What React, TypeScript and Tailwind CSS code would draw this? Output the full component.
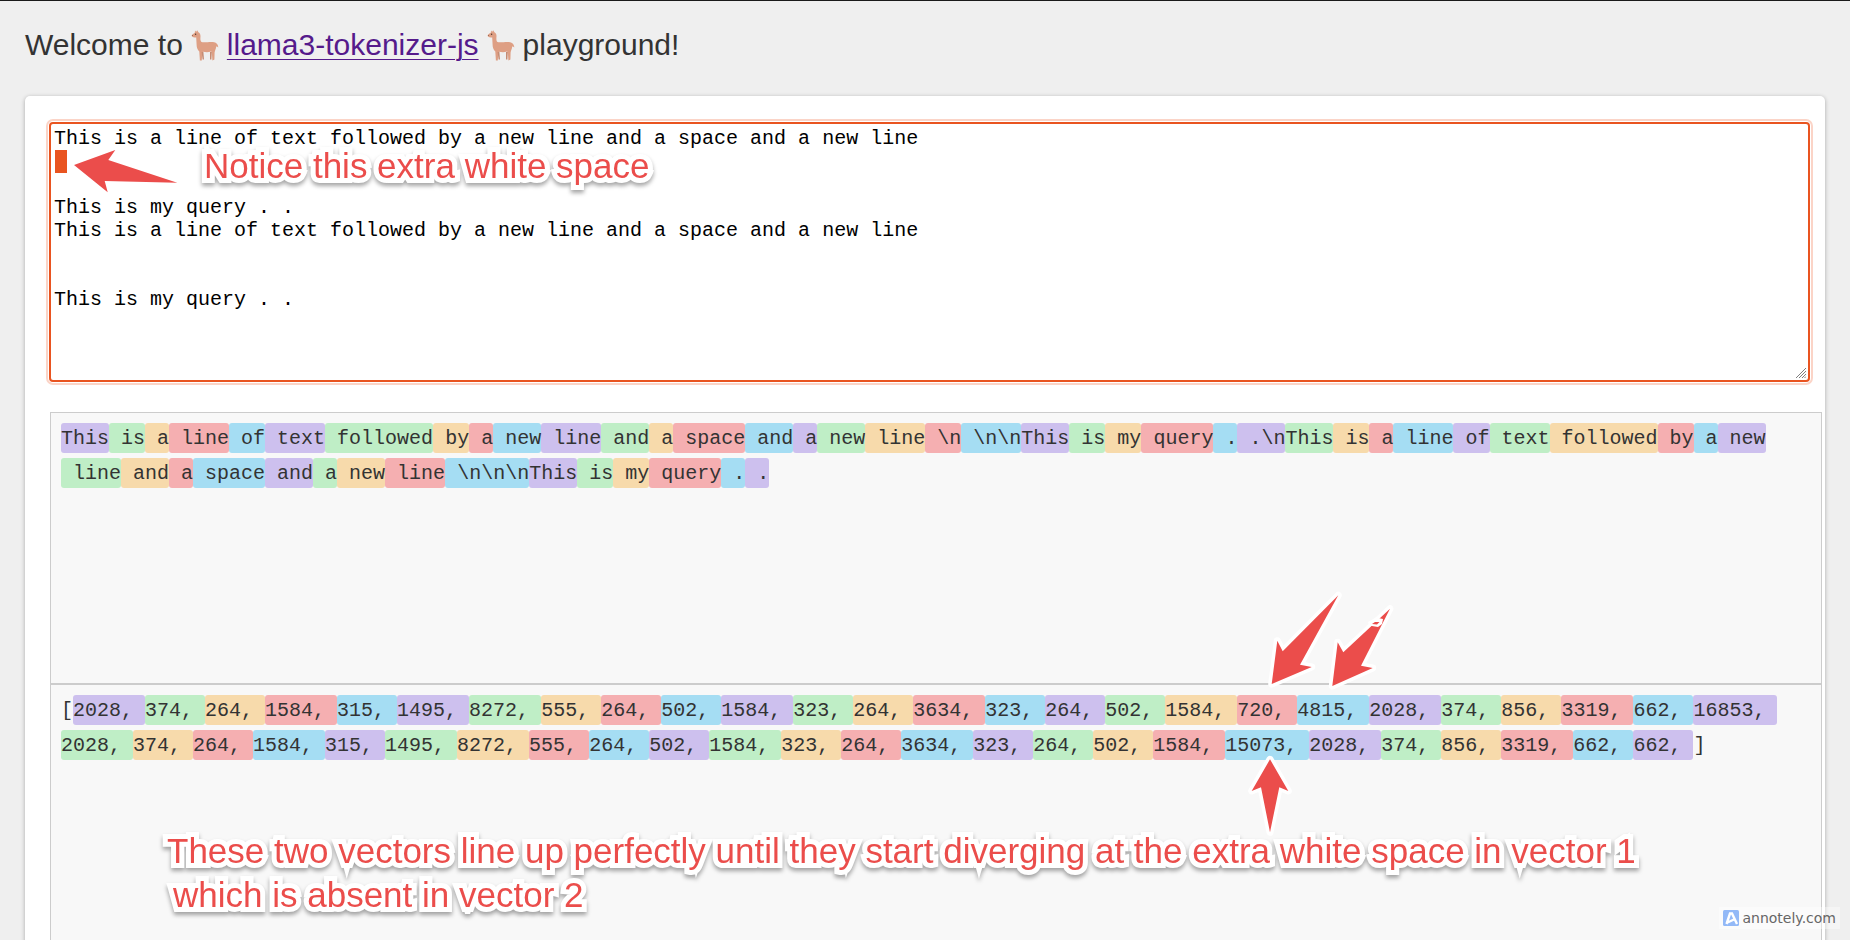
import React from "react";

const LINE = "This is a line of text followed by a new line and a space and a new line";
const QUERY = "This is my query . .";
const INPUT_TEXT = [LINE, " ", "", QUERY, LINE, "", "", QUERY].join("\n");

const TOKENS: [string, number][] = [
  ["This", 2028], [" is", 374], [" a", 264], [" line", 1584], [" of", 315], [" text", 1495],
  [" followed", 8272], [" by", 555], [" a", 264], [" new", 502], [" line", 1584], [" and", 323],
  [" a", 264], [" space", 3634], [" and", 323], [" a", 264], [" new", 502], [" line", 1584],
  [" \\n", 720], [" \\n\\n", 4815], ["This", 2028], [" is", 374], [" my", 856], [" query", 3319],
  [" .", 662], [" .\\n", 16853],
  ["This", 2028], [" is", 374], [" a", 264], [" line", 1584], [" of", 315], [" text", 1495],
  [" followed", 8272], [" by", 555], [" a", 264], [" new", 502], [" line", 1584], [" and", 323],
  [" a", 264], [" space", 3634], [" and", 323], [" a", 264], [" new", 502], [" line", 1584],
  [" \\n\\n\\n", 15073], ["This", 2028], [" is", 374], [" my", 856], [" query", 3319],
  [" .", 662], [" .", 662],
];

const TOKEN_COLORS = [
  "bg-[rgba(107,64,216,0.3)]",
  "bg-[rgba(104,222,122,0.4)]",
  "bg-[rgba(244,172,54,0.4)]",
  "bg-[rgba(239,65,70,0.4)]",
  "bg-[rgba(39,181,234,0.4)]",
];

const ARROWS = [
  "74,165 115.3,150 108.3,160 177.3,182.7 104.7,181 107.7,192.3",
  "1271.7,684 1277.3,640.7 1282.7,651.3 1338.3,595.3 1300,664.7 1311.7,667",
  "1332.3,686 1337.7,642.3 1343.3,652.3 1390,608.7 1361,665.7 1372.7,668",
  "1270,759.3 1288.3,791 1279.3,787.3 1270,832.3 1261,787.3 1251.7,791",
];

function Token({ index, children }: { index: number; children: React.ReactNode }) {
  return (
    <span className={`h-[30px] whitespace-pre rounded-[3px] ${TOKEN_COLORS[index % 5]}`}>
      {children}
    </span>
  );
}

function OutputBox({ label, children }: { label: string; children: React.ReactNode }) {
  return (
    <section
      aria-label={label}
      className="flex h-[272px] flex-wrap content-start gap-y-[5px] border border-[#ccc] bg-[#f8f8f8] p-2.5 font-['Liberation_Mono',monospace] text-[20px] leading-8 text-[#333]"
    >
      {children}
    </section>
  );
}

function Llama() {
  return (
    <svg role="img" aria-label="llama" viewBox="0 0 28 31" className="mx-2 h-[31px] w-7">
      <path
        d="M4 0.5 L5.2 1.8 L6.2 0.2 L7.4 2.2 C9 3 9.6 4.5 9.5 6.5 C9.3 9 9.2 11 10.5 12 C13 13 18 11.6 22 12 C25 12.3 27.5 14.5 27.2 17.6 C26.3 16.6 25.8 16.4 25.2 16.6 C25 19 24 20.5 23.6 22.5 L23.4 29.5 L21.4 30.5 L20.9 23.5 L20.2 21.6 C17 22.6 14.5 22.4 12.2 21.8 L11.2 24 L10.8 30.5 L8.9 30.5 L8.3 21.5 C6.3 19.5 5.6 17.4 5.6 14.5 L5.2 7.6 C3.6 7.6 1 7.4 0.7 6 C0.5 4.6 2.6 3.6 3.8 2.8 Z"
        fill="#de9f84"
      />
      <path d="M10.6 22 L12.4 22 L13 29.6 L11.6 29.6 Z M19 22 L20.8 22 L20.4 29.6 L19 29.6 Z" fill="#c58b73" />
      <circle cx="4.6" cy="4.3" r="0.7" fill="#543930" />
      <path d="M0.8 5.2 L2 5 L1.6 6 Z" fill="#6d4537" />
    </svg>
  );
}

function Note({ className, children }: { className: string; children: React.ReactNode }) {
  return (
    <p
      className={`absolute whitespace-pre font-['Liberation_Sans',sans-serif] text-[35px] leading-[44px] text-[#eb4d4b] [-webkit-text-stroke:10px_white] [paint-order:stroke_fill] [stroke-linejoin:round] drop-shadow-[0_3px_2px_rgba(0,0,0,0.35)] ${className}`}
    >
      {children}
    </p>
  );
}

function Arrows() {
  return (
    <svg aria-hidden="true" className="h-full w-full">
      {ARROWS.map((points) => (
        <polygon
          key={points}
          points={points}
          fill="#eb4d4b"
          stroke="white"
          strokeWidth="7"
          strokeLinejoin="round"
          paintOrder="stroke"
        />
      ))}
      <path d="M1368 622 L1376 617.5 L1383 619 L1382 624 L1378 627 L1369 625.5 Z" fill="white" />
      <path d="M1372 624 L1375 622 L1379.5 622 L1377 624.5 Z" fill="#eb4d4b" />
    </svg>
  );
}

export default function App() {
  return (
    <div className="relative flex h-screen flex-col overflow-hidden border-t border-[#1a1a1a] bg-[#efefef] px-[25px] pt-6 font-['Liberation_Sans',sans-serif] text-[#333]">
      <h1 className="flex shrink-0 items-center text-[30px] leading-10">
        Welcome to
        <Llama />
        <a href="#llama3-tokenizer-js" className="text-[#551a8b] underline decoration-1 underline-offset-4">
          llama3-tokenizer-js
        </a>
        <Llama />
        playground!
      </h1>

      <main className="mt-[31px] shrink-0 rounded-[5px] bg-white pt-[26px] pr-[3px] pb-6 pl-6 shadow-[0_1px_4px_rgba(0,0,0,0.3)]">
        <div className="relative mr-3 h-[260px]">
          <textarea
            aria-label="Text to tokenize"
            defaultValue={INPUT_TEXT}
            spellCheck={false}
            className="block h-full w-full resize-none rounded-[4px] border-2 border-[#e95420] bg-white p-[3px] font-['Liberation_Mono',monospace] text-[20px] leading-[23px] text-black outline-2 outline-offset-1 outline-[#fbd4c7]"
          />
          <span className="absolute top-7 left-1.5 h-[23px] w-3 bg-[#e95420]" />
          <svg aria-hidden="true" viewBox="0 0 10 10" className="absolute right-1 bottom-1 h-2.5 w-2.5" stroke="#808080" fill="none">
            <path d="M0 10 L10 0 M3 10 L10 3 M6 10 L10 6 M8.5 10 L10 8.5" />
          </svg>
          <Note className="top-[22px] left-[155px]">Notice this extra white space</Note>
        </div>

        <div className="relative mt-[30px] ml-px">
          <OutputBox label="Tokens">
            {TOKENS.map(([text], i) => (
              <Token key={i} index={i}>{text}</Token>
            ))}
          </OutputBox>
          <OutputBox label="Token ids">
            <span className="h-[30px]">[</span>
            {TOKENS.map(([, id], i) => (
              <Token key={i} index={i}>{`${id}, `}</Token>
            ))}
            <span className="h-[30px]">]</span>
          </OutputBox>
          <Note className="top-[417px] left-[117px]">
            These two vectors line up perfectly until they start diverging at the extra white space in vector 1
            <span className="block pl-1.5">which is absent in vector 2</span>
          </Note>
        </div>
      </main>

      <div className="pointer-events-none absolute inset-x-0 -top-px h-screen">
        <Arrows />
      </div>

      <div className="absolute right-2.5 bottom-[11px] flex h-[22px] items-center gap-[3px] bg-white/40 px-1 font-['DejaVu_Sans',sans-serif] text-[14px] leading-[22px] text-[#666]">
        <svg aria-hidden="true" viewBox="0 0 16 16" className="h-4 w-4">
          <rect width="16" height="16" rx="1.5" fill="#93b9f7" />
          <path d="M3.5 14 L7 3.5 L9 3.5 L14 14 M4.5 12.5 L11 9.5" fill="none" stroke="white" strokeWidth="2.4" />
        </svg>
        annotely.com
      </div>
    </div>
  );
}
